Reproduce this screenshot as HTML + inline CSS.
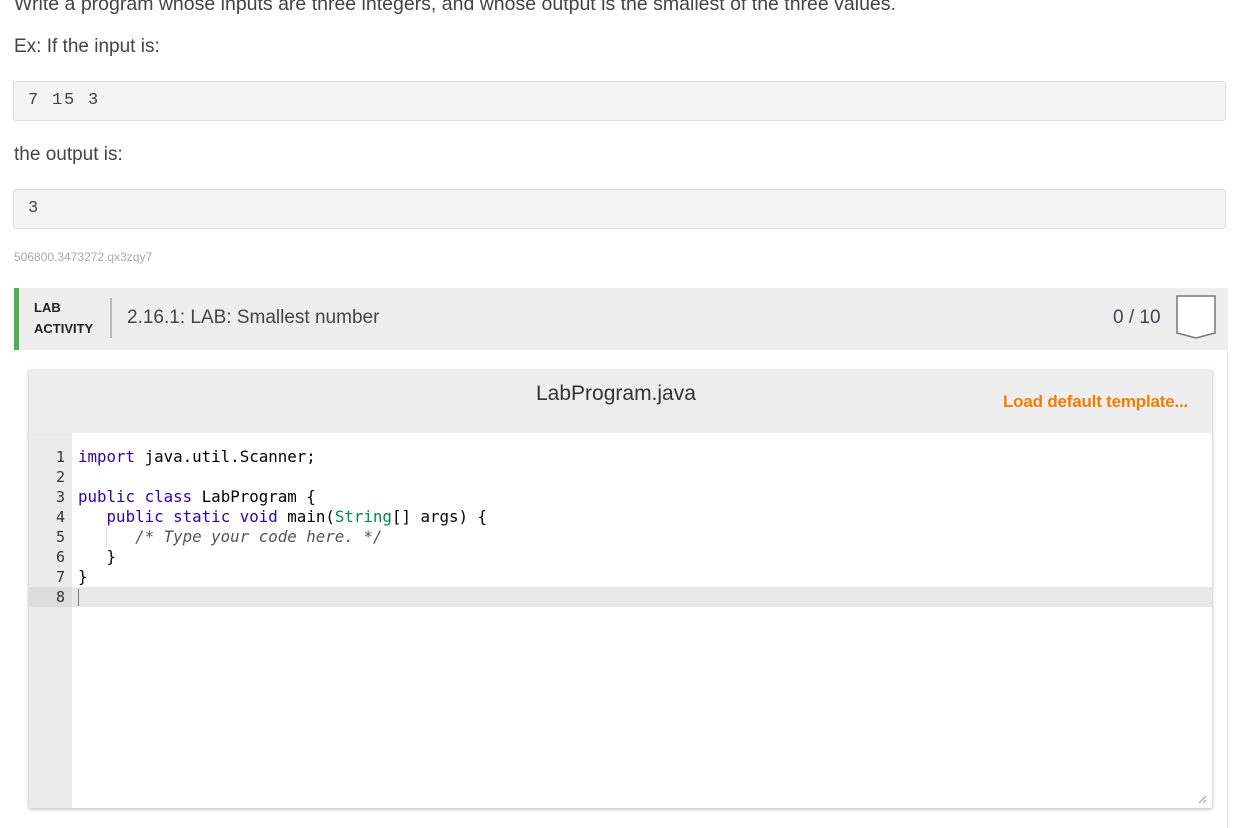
<!DOCTYPE html>
<html><head><style>
*{margin:0;padding:0;box-sizing:border-box}
body{width:1245px;height:827px;background:#fff;font-family:"Liberation Sans",sans-serif;color:#444;position:relative;overflow:hidden}
.a{position:absolute}
.t{font-size:19px;color:#444;white-space:nowrap}
.pre{background:#f4f4f4;border:1px solid #ddd;border-radius:3px;font-family:"Liberation Mono",monospace;font-size:17px;letter-spacing:1.8px;color:#444;padding-left:14px;line-height:38px}
.code{font-family:"DejaVu Sans Mono","Liberation Mono",monospace;font-size:15.8px;line-height:20px;white-space:pre;color:#000}
.k{color:#30a}.v{color:#085}.c{color:#555;font-style:italic}
.ln{font-family:"DejaVu Sans Mono",monospace;font-size:15px;line-height:20px;color:#333;text-align:right;width:36px}
</style></head><body>
<div class="a t" style="left:14px;top:-7px;font-size:19.5px">Write a program whose inputs are three integers, and whose output is the smallest of the three values.</div>
<div class="a t" style="left:14px;top:36px">Ex: If the input is:</div>
<div class="a pre" style="left:13px;top:81px;width:1213px;height:40px">7 15 3</div>
<div class="a t" style="left:14px;top:144px">the output is:</div>
<div class="a pre" style="left:13px;top:189px;width:1213px;height:40px">3</div>
<div class="a" style="left:14px;top:250px;font-size:12px;color:#aaa">506800.3473272.qx3zqy7</div>

<div class="a" style="left:14px;top:288px;width:1214px;height:540px;border-right:1px solid #e8e8e8"></div>
<div class="a" style="left:14px;top:288px;width:1214px;height:62px;background:#eee;border-left:5px solid #4caf50"></div>
<div class="a" style="left:34px;top:297px;font-size:13px;font-weight:bold;color:#222;line-height:21px">LAB<br>ACTIVITY</div>
<div class="a" style="left:110px;top:298px;width:2px;height:40px;background:#bbb"></div>
<div class="a t" style="left:127px;top:307px;font-size:19px;color:#444">2.16.1: LAB: Smallest number</div>
<div class="a t" style="left:1113px;top:307px;font-size:19px;color:#445">0 / 10</div>
<svg class="a" style="left:1174px;top:295px" width="44" height="48"><path d="M3 1H41V38L22 43L3 38Z" fill="#fff" stroke="#777" stroke-width="1.5"/></svg>

<div class="a" style="left:29px;top:370px;width:1183px;height:438px;background:#fff;box-shadow:0 1px 4px rgba(0,0,0,.3)"></div>
<div class="a" style="left:29px;top:370px;width:1183px;height:63px;background:#eee"></div>
<div class="a" style="left:536px;top:382px;font-size:21px;color:#333">LabProgram.java</div>
<div class="a" style="left:1003px;top:392px;font-size:17px;font-weight:bold;color:#f57c00;letter-spacing:-0.2px">Load default template...</div>
<div class="a" style="left:29px;top:433px;width:43px;height:375px;background:#ebebeb"></div>
<div class="a" style="left:29px;top:587px;width:1183px;height:20px;background:#e8e8e8"></div>
<div class="a" style="left:29px;top:587px;width:43px;height:20px;background:#dcdcdc"></div>
<div class="a ln" style="left:29px;top:447px">1<br>2<br>3<br>4<br>5<br>6<br>7<br>8</div>
<div class="a code" style="left:78px;top:447px"><span class="k">import</span> java.util.Scanner;

<span class="k">public</span> <span class="k">class</span> LabProgram {
   <span class="k">public</span> <span class="k">static</span> <span class="k">void</span> main(<span class="v">String</span>[] args) {
      <span class="c">/* Type your code here. */</span>
   }
}
</div>
<div class="a" style="left:106px;top:527px;width:1px;height:20px;border-left:1px dotted #ccc"></div>
<div class="a" style="left:78px;top:589px;width:1px;height:17px;background:#777"></div>
<svg class="a" style="left:1197px;top:794px" width="10" height="10"><path d="M9 2L2 9M9 6L6 9" stroke="#999"/></svg>
</body></html>
